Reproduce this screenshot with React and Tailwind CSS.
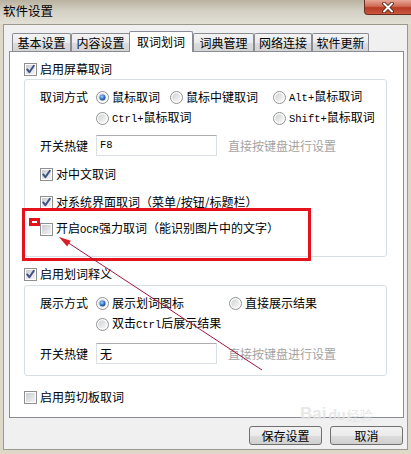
import React from "react";

const cjk = "font-['Noto_Sans_CJK_SC','Noto_Sans_CJK_JP',sans-serif]";
const mono = "font-['Liberation_Mono',monospace] text-[10.5px]";

function Check({ checked }) {
  return (
    <svg width="13" height="13" viewBox="0 0 13 13" className="shrink-0">
      <defs>
        <linearGradient id={checked ? "cbg1" : "cbg0"} x1="0" y1="0" x2="1" y2="1">
          <stop offset="0" stopColor="#c9ccd1" />
          <stop offset="1" stopColor="#f4f4f4" />
        </linearGradient>
      </defs>
      <rect x="0.5" y="0.5" width="12" height="12" fill="#fff" stroke="#8e8f8f" />
      <rect x="2" y="2" width="9" height="9" fill={`url(#${checked ? "cbg1" : "cbg0"})`} />
      {checked && (
        <path d="M3.2 6.4 L5.4 9.2 L9.8 2.8" fill="none" stroke="#3d4f80" strokeWidth="1.9" strokeLinecap="round" strokeLinejoin="round" />
      )}
    </svg>
  );
}

function Radio({ checked }) {
  return (
    <svg width="13" height="13" viewBox="0 0 13 13" className="shrink-0">
      <defs>
        <linearGradient id="rbg" x1="0" y1="0" x2="1" y2="1">
          <stop offset="0" stopColor="#cfd1d4" />
          <stop offset="1" stopColor="#fafafa" />
        </linearGradient>
        <radialGradient id="rdot" cx="0.4" cy="0.35" r="0.7">
          <stop offset="0" stopColor="#a9d4ff" />
          <stop offset="0.6" stopColor="#2f6fc4" />
          <stop offset="1" stopColor="#1b3f7c" />
        </radialGradient>
      </defs>
      <circle cx="6.5" cy="6.5" r="6" fill="#fff" stroke="#8e8f8f" />
      <circle cx="6.5" cy="6.5" r="4.3" fill="url(#rbg)" />
      {checked && <circle cx="6.5" cy="6.5" r="3" fill="url(#rdot)" />}
    </svg>
  );
}

function CheckRow({ checked, children, className = "" }) {
  return (
    <div className={`flex items-center gap-[3px] ${className}`}>
      <Check checked={checked} />
      <span className="leading-[16px] whitespace-nowrap">{children}</span>
    </div>
  );
}

function RadioItem({ checked, children, className = "" }) {
  return (
    <div className={`flex items-center gap-[3px] ${className}`}>
      <Radio checked={checked} />
      <span className="leading-[16px] whitespace-nowrap">{children}</span>
    </div>
  );
}

function HotkeyRow({ value, className = "" }) {
  return (
    <div className={`flex items-center h-[21px] ${className}`}>
      <span className="w-[56px] leading-[16px]">开关热键</span>
      <div className="w-[121px] h-[21px] bg-white border border-[#dbdfe6] border-t-[#abadb3] flex items-center pl-[3px]">
        {value}
      </div>
      <span className="ml-[11px] text-[#a3a3a3] leading-[16px]">直接按键盘进行设置</span>
    </div>
  );
}

const tabs = [
  { name: "基本设置", w: "w-[59px]" },
  { name: "内容设置", w: "w-[59px]" },
  { name: "取词划词", w: "w-[64px]", active: true },
  { name: "词典管理", w: "w-[61px]" },
  { name: "网络连接", w: "w-[58px]" },
  { name: "软件更新", w: "w-[57px]" },
];

export default function App() {
  return (
    <div className={`relative w-[411px] h-[454px] overflow-hidden bg-[#ddd8c7] text-[12px] text-black ${cjk}`}>
      {/* title bar */}
      <div className="h-[24px] flex justify-between bg-[linear-gradient(180deg,#b9b2a0_0%,#d3cfc3_45%,#e2dfd5_100%)]">
        <div className="pl-[3px] pt-[3px] text-[12.5px] leading-[16px]">软件设置</div>
        <div className="w-[47px] h-[15px] rounded-bl-[4px] border border-t-0 border-r-0 border-[#6b2d22] bg-[linear-gradient(180deg,#e7a696_0%,#d06a55_45%,#b83a24_55%,#c9593e_100%)] flex items-center justify-center">
          <svg width="14" height="11" viewBox="0 0 14 11">
            <path d="M3 1.5 L11 9.5 M11 1.5 L3 9.5" stroke="#4d1a10" strokeWidth="3.6" strokeLinecap="round" />
            <path d="M3 1.5 L11 9.5 M11 1.5 L3 9.5" stroke="#ffffff" strokeWidth="2" strokeLinecap="round" />
          </svg>
        </div>
      </div>

      {/* window body */}
      <div className="mx-[3px] h-[426px] bg-[#f0f0f0] border border-[#9c988c] pl-[5px] pr-[3px] pt-[6px]">
        {/* tabs */}
        <div className="flex items-end h-[20px] pl-[3px]">
          {tabs.map((t) =>
            t.active ? (
              <div
                key={t.name}
                className={`${t.w} -ml-px h-[21px] -mb-px relative z-10 bg-white border border-b-0 border-[#898c95] rounded-t-[2px] flex items-start justify-center pt-[2px] leading-[16px]`}
              >
                {t.name}
              </div>
            ) : (
              <div
                key={t.name}
                className={`${t.w} h-[18px] border border-b-0 border-[#898c95] rounded-t-[2px] bg-[linear-gradient(180deg,#f3f3f3_0%,#ebebeb_50%,#dddddd_51%,#d3d3d3_100%)] flex items-center justify-center leading-[16px]`}
              >
                {t.name}
              </div>
            )
          )}
        </div>

        {/* tab panel */}
        <div className="w-[395px] h-[367px] bg-white border border-[#898c95] pl-[14px] pt-[9px]">
          <CheckRow checked className="h-[16px]">启用屏幕取词</CheckRow>

          <div className="mt-[2px] w-[363px] h-[178px] border border-[#d5dfe5] rounded-[3px] pl-[15px] pt-[7px]">
            <div className="flex items-center h-[20px]">
              <span className="w-[56px] leading-[16px]">取词方式</span>
              <RadioItem checked className="w-[74px]">鼠标取词</RadioItem>
              <RadioItem className="w-[103px]">鼠标中键取词</RadioItem>
              <RadioItem>
                <span className={mono}>Alt+</span>鼠标取词
              </RadioItem>
            </div>
            <div className="flex items-center h-[20px] mt-[1px]">
              <span className="w-[56px]" />
              <RadioItem className="w-[177px]">
                <span className={mono}>Ctrl+</span>鼠标取词
              </RadioItem>
              <RadioItem>
                <span className={mono}>Shift+</span>鼠标取词
              </RadioItem>
            </div>
            <HotkeyRow className="mt-[7px]" value={<span className={mono}>F8</span>} />
            <CheckRow checked className="h-[20px] mt-[8px]">对中文取词</CheckRow>
            <CheckRow checked className="h-[20px] mt-[8px]">对系统界面取词（菜单/按钮/标题栏）</CheckRow>
            <CheckRow className="h-[20px] mt-[7px]">
              开启<span className={mono}>OCR</span>强力取词（能识别图片中的文字）
            </CheckRow>
          </div>

          <CheckRow checked className="h-[16px] mt-[9px]">启用划词释义</CheckRow>

          <div className="mt-[3px] w-[363px] h-[91px] border border-[#d5dfe5] rounded-[3px] pl-[15px] pt-[7px]">
            <div className="flex items-center h-[20px]">
              <span className="w-[56px] leading-[16px]">展示方式</span>
              <RadioItem checked className="w-[133px]">展示划词图标</RadioItem>
              <RadioItem>直接展示结果</RadioItem>
            </div>
            <div className="flex items-center h-[20px] mt-[1px]">
              <span className="w-[56px]" />
              <RadioItem>
                双击<span className={mono}>Ctrl</span>后展示结果
              </RadioItem>
            </div>
            <HotkeyRow className="mt-[9px]" value="无" />
          </div>

          <CheckRow className="h-[16px] mt-[13px]">启用剪切板取词</CheckRow>
        </div>

        {/* buttons */}
        <div className="mt-[8px] mr-px flex justify-end gap-[8px]">
          <button className="w-[73px] h-[19px] rounded-[3px] border border-[#707070] bg-[linear-gradient(180deg,#f2f2f2_0%,#ebebeb_50%,#dddddd_51%,#cfcfcf_100%)] leading-[16px]">
            保存设置
          </button>
          <button className="w-[73px] h-[19px] rounded-[3px] border border-[#707070] bg-[linear-gradient(180deg,#f2f2f2_0%,#ebebeb_50%,#dddddd_51%,#cfcfcf_100%)] leading-[16px]">
            取消
          </button>
        </div>
      </div>

      {/* watermark */}
      <div className="absolute left-[300px] top-[405px] flex items-end text-[#e3e3e3] opacity-80 pointer-events-none">
        <span className="font-['Liberation_Sans',sans-serif] font-bold text-[17px] leading-[17px]">Bai</span>
        <span className="font-['Liberation_Sans',sans-serif] font-bold text-[14px] leading-[14px] ml-[2px]">du</span>
        <span className="text-[13px] leading-[14px] ml-[1px]">经验</span>
      </div>

      {/* annotation */}
      <div className="absolute left-[22px] top-[208px] w-[289px] h-[53px] border-[3px] border-[#e5121b] pointer-events-none" />
      <div className="absolute left-[29px] top-[218px] w-[11px] h-[8px] bg-[#e5121b] flex items-center justify-center pointer-events-none">
        <div className="w-[5px] h-[2px] bg-white" />
      </div>
      <svg className="absolute left-0 top-0 pointer-events-none" width="411" height="454" viewBox="0 0 411 454">
        <line x1="262" y1="370" x2="67" y2="242" stroke="#a3153c" strokeWidth="1" />
        <polygon points="59,237 67.1,246.5 70.9,240.7" fill="#d61f26" />
      </svg>
    </div>
  );
}
